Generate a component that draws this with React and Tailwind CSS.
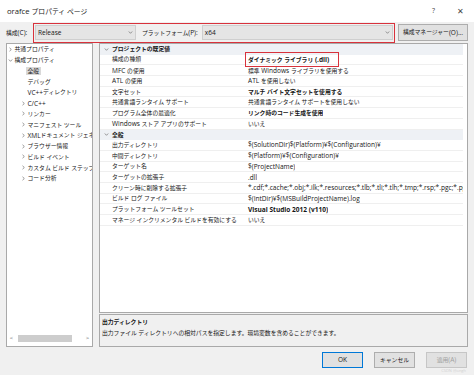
import React from "react";

const Chev = ({ dir = "right", className = "" }) => (
  <svg width="5" height="5" viewBox="0 0 5 5" className={className}>
    {dir === "right" ? (
      <path d="M1.5 0.8 L3.3 2.5 L1.5 4.2" fill="none" stroke="#6d6d6d" strokeWidth="0.7" />
    ) : (
      <path d="M0.8 1.5 L2.5 3.3 L4.2 1.5" fill="none" stroke="#6d6d6d" strokeWidth="0.7" />
    )}
  </svg>
);

// render latin runs slightly larger (Segoe-like proportions next to CJK)
const T = ({ s }) => {
  const parts = String(s).split(/([\x20-\x7E¥]+)/);
  return (
    <>
      {parts.map((p, i) =>
        /^[\x20-\x7E¥]+$/.test(p) && /[^\s]/.test(p) ? (
          <span key={i} className="text-[1.13em]">{p}</span>
        ) : (
          <React.Fragment key={i}>{p}</React.Fragment>
        )
      )}
    </>
  );
};

const tree = [
  { label: "共通プロパティ", level: 0, chev: "right" },
  { label: "構成プロパティ", level: 0, chev: "down" },
  { label: "全般", level: 1, selected: true },
  { label: "デバッグ", level: 1 },
  { label: "VC++ ディレクトリ", level: 1 },
  { label: "C/C++", level: 1, chev: "right" },
  { label: "リンカー", level: 1, chev: "right" },
  { label: "マニフェスト ツール", level: 1, chev: "right" },
  { label: "XML ドキュメント ジェネレーター", level: 1, chev: "right" },
  { label: "ブラウザー情報", level: 1, chev: "right" },
  { label: "ビルド イベント", level: 1, chev: "right" },
  { label: "カスタム ビルド ステップ", level: 1, chev: "right" },
  { label: "コード分析", level: 1, chev: "right" },
];

const sections = [
  {
    title: "プロジェクトの既定値",
    rows: [
      ["構成の種類", "ダイナミック ライブラリ (.dll)", true, true],
      ["MFC の使用", "標準 Windows ライブラリを使用する"],
      ["ATL の使用", "ATL を使用しない"],
      ["文字セット", "マルチ バイト文字セットを使用する", true],
      ["共通言語ランタイム サポート", "共通言語ランタイム サポートを使用しない"],
      ["プログラム全体の最適化", "リンク時のコード生成を使用", true],
      ["Windows ストア アプリのサポート", "いいえ"],
    ],
  },
  {
    title: "全般",
    rows: [
      ["出力ディレクトリ", "$(SolutionDir)$(Platform)¥$(Configuration)¥"],
      ["中間ディレクトリ", "$(Platform)¥$(Configuration)¥"],
      ["ターゲット名", "$(ProjectName)"],
      ["ターゲットの拡張子", ".dll"],
      ["クリーン時に削除する拡張子", "*.cdf;*.cache;*.obj;*.ilk;*.resources;*.tlb;*.tli;*.tlh;*.tmp;*.rsp;*.pgc;*.pgd;*.meta;$(TargetPath)"],
      ["ビルド ログ ファイル", "$(IntDir)¥$(MSBuildProjectName).log"],
      ["プラットフォーム ツールセット", "Visual Studio 2012 (v110)", true],
      ["マネージ インクリメンタル ビルドを有効にする", "いいえ"],
    ],
  },
];

export default function App() {
  return (
    <div className="relative w-[474px] h-[375px] overflow-hidden bg-[#f0f0f0] text-[#161616] text-[5.8px] leading-[1.4] font-['Open_Sans','Noto_Sans_CJK_JP',sans-serif] flex flex-col">
      {/* title bar */}
      <div className="h-[22px] shrink-0 bg-white flex items-center pl-[7px] pr-[10px] text-[6.8px] text-[#222]">
        <span><T s="orafce プロパティ ページ" /></span>
        <span className="ml-auto mr-[22px] text-[7px] text-[#444]">?</span>
        <span className="text-[8px] text-[#444]">✕</span>
      </div>

      {/* top row */}
      <div className="h-[21px] shrink-0 flex items-center pl-[6px] pr-[6px] whitespace-nowrap">
        <span className="w-[27px] shrink-0"><T s="構成(C):" /></span>
        <div className="h-[20px] w-[362px] shrink-0 border-[1.5px] border-[#d8323c] flex items-center px-[1px]">
          <div className="h-[15px] w-[101px] shrink-0 bg-[#e5e5e5] border border-[#cfcfcf] flex items-center pl-[2px] pr-[2px]">
            <span><T s="Release" /></span>
            <Chev dir="down" className="ml-auto" />
          </div>
          <span className="ml-[6px] mr-[4px] shrink-0"><T s="プラットフォーム(P):" /></span>
          <div className="h-[15px] flex-1 bg-[#e5e5e5] border border-[#cfcfcf] flex items-center pl-[2px] pr-[2px]">
            <span><T s="x64" /></span>
            <Chev dir="down" className="ml-auto" />
          </div>
        </div>
        <div className="ml-auto h-[17px] w-[70px] shrink-0 bg-[#e1e1e1] border border-[#adadad] flex items-center justify-center">
          <T s="構成マネージャー(O)..." />
        </div>
      </div>

      {/* main */}
      <div className="h-[304px] shrink-0 flex gap-[6px] px-[6px]">
        {/* tree */}
        <div className="w-[87px] shrink-0 bg-white border border-[#a9a9a9] flex flex-col overflow-hidden">
          <div className="flex-1 flex flex-col overflow-hidden">
            {tree.map((t, i) => (
              <div
                key={i}
                className={`h-[10.75px] shrink-0 flex items-center whitespace-nowrap ${t.level === 1 ? "pl-[14px]" : "pl-[1px]"}`}
              >
                <span className="w-[5px] shrink-0 flex items-center justify-center">
                  {t.chev ? <Chev dir={t.chev} /> : null}
                </span>
                <span className={`px-[1.5px] h-[8.5px] flex items-center ${t.selected ? "bg-[#d9d9d9]" : ""}`}>
                  <T s={t.label} />
                </span>
              </div>
            ))}
          </div>
          <div className="h-[11px] mb-[2px] flex items-center px-[2px] text-[#606060]">
            <span className="w-[5px] flex justify-center text-[6px]">&lt;</span>
            <div className="ml-[4px] h-[7px] w-[54px] bg-[#cdcdcd]" />
            <span className="ml-auto w-[5px] flex justify-center text-[6px]">&gt;</span>
          </div>
        </div>

        {/* right column */}
        <div className="flex-1 min-w-0 flex flex-col gap-[1px]">
          <div className="h-[270px] bg-white border border-[#a9a9a9] pr-[4px] overflow-hidden">
            {sections.map((s, si) => (
              <div key={si}>
                <div className="h-[10.7px] bg-[#eef1f5] flex items-center font-bold whitespace-nowrap">
                  <span className="w-[12px] flex justify-center pl-[1px]">
                    <Chev dir="down" />
                  </span>
                  <span><T s={s.title} /></span>
                </div>
                {s.rows.map((r, ri) => (
                  <div key={ri} className="h-[10.7px] flex items-center border-b-[0.5px] border-[#efefef] whitespace-nowrap">
                    <span className="w-[146px] pl-[12px] shrink-0 overflow-hidden"><T s={r[0]} /></span>
                    <span className={`relative pl-[2px] ${r[3] ? "" : "overflow-hidden"} ${r[2] ? "font-bold" : ""}`}>
                      <T s={r[1]} />
                      {r[3] ? (
                        <span className="absolute -top-[2.5px] -bottom-[2.5px] -left-[1px] w-[94px] border-[1.5px] border-[#d8323c]" />
                      ) : null}
                    </span>
                  </div>
                ))}
              </div>
            ))}
          </div>
          <div className="h-[33px] bg-[#f0f0f0] border border-[#a9a9a9] px-[2px] pt-[3px] flex flex-col gap-[2.5px] whitespace-nowrap overflow-hidden">
            <span className="font-bold"><T s="出力ディレクトリ" /></span>
            <span>出力ファイル ディレクトリへの相対パスを指定します。環境変数を含めることができます。</span>
          </div>
        </div>
      </div>

      {/* buttons */}
      <div className="flex-1 flex items-center justify-end pr-[7px] pb-[2px] gap-[11px]">
        <div className="h-[16px] w-[41px] bg-[#e1e1e1] border border-[#0078d7] flex items-center justify-center"><T s="OK" /></div>
        <div className="h-[16px] w-[41px] bg-[#e1e1e1] border border-[#adadad] flex items-center justify-center">キャンセル</div>
        <div className="h-[16px] w-[41px] bg-[#e1e1e1] border border-[#c6c6c6] flex items-center justify-center text-[#a0a0a0]"><T s="適用(A)" /></div>
      </div>
      <span className="absolute right-[8px] bottom-[1px] text-[4px] text-[#d0d0d0]">CSDN @ongh</span>
    </div>
  );
}
